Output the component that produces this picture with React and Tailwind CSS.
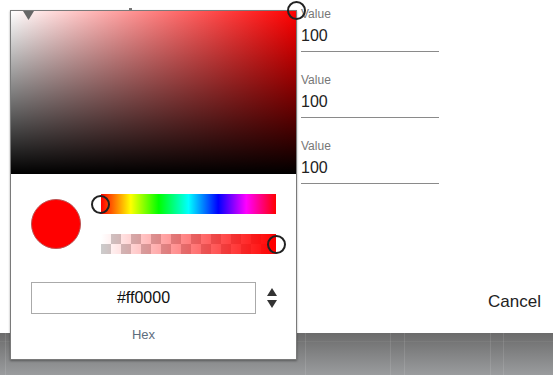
import { useState } from "react";

const fields = ["100", "100", "100"];

export default function App() {
  const [hex, setHex] = useState("#ff0000");

  return (
    <div className="relative flex h-[375px] w-[553px] flex-col overflow-hidden bg-white font-['Liberation_Sans',Arial,sans-serif]">
      {/* page form behind the picker */}
      <div className="flex flex-1 flex-col">
        <div className="flex flex-col pl-[301px] pt-[7px]">
          {fields.map((v, i) => (
            <div key={i} className="mb-[21px] flex w-[138px] flex-col">
              <span className="text-[12px] leading-[14px] text-[#777]">Value</span>
              <div className="border-b border-[#8a8a8a] pt-[5px] pb-[5px] text-[16px] leading-[20px] text-[#222]">
                {v}
              </div>
            </div>
          ))}
        </div>
        <div className="mt-auto flex justify-end pr-[12px] pb-[21px]">
          <button className="text-[17px] leading-[20px] text-[#222]">Cancel</button>
        </div>
      </div>

      {/* backdrop strip */}
      <div className="relative h-[42px] bg-[linear-gradient(to_bottom,#6b6b6b,#9a9c9e)]">
        <div className="absolute inset-x-0 top-[8px] h-px bg-white/5" />
        <div className="absolute inset-y-0 left-[5px] w-px bg-white/10" />
        <div className="absolute inset-y-0 left-[305px] w-px bg-white/10" />
        <div className="absolute inset-y-0 left-[390px] w-px bg-white/10" />
        <div className="absolute inset-y-0 left-[404px] w-px bg-white/10" />
        <div className="absolute inset-y-0 left-[490px] w-px bg-white/10" />
        <div className="absolute inset-y-0 left-[503px] w-px bg-white/10" />
      </div>

      {/* tiny mark peeking above the popup */}
      <span className="absolute left-[129px] top-[8px] h-[2px] w-[3px] bg-[#777]" />

      {/* colour picker popup */}
      <div className="absolute left-[10px] top-[10px] flex h-[350px] w-[287px] flex-col border border-[#7a7a7a] bg-white shadow-[0_1px_2px_rgba(0,0,0,0.35)]">
        <div className="relative h-[163px] bg-[linear-gradient(to_bottom,rgba(0,0,0,0),#000),linear-gradient(to_right,#fff,#f00)]">
          <svg className="absolute left-[12px] top-0" width="11" height="10" viewBox="0 0 11 10">
            <path d="M0 0 H11 L5.5 9 Z" fill="#666" />
          </svg>
          <span className="absolute -right-[10px] -top-[10px] h-[19px] w-[19px] rounded-full border-2 border-[#222]" />
        </div>

        <div className="flex flex-col pl-[20px] pt-[20px]">
          <div className="flex items-start">
            <div className="mt-[5px] h-[50px] w-[50px] rounded-full border border-[#b55] bg-[#f00]" />
            <div className="ml-[20px] flex w-[175px] flex-col gap-[20px]">
              <div className="relative h-[20px] bg-[linear-gradient(to_right,#f00_0%,#ff0_17%,#0f0_33%,#0ff_50%,#00f_67%,#f0f_83%,#f00_100%)]">
                <span className="absolute -left-[10px] top-[0.5px] h-[19px] w-[19px] rounded-full border-2 border-[#222]" />
              </div>
              <div className="relative h-[20px] bg-[linear-gradient(to_right,rgba(255,0,0,0),#f00),repeating-conic-gradient(#ccc_0_25%,#fff_0_50%)] bg-[length:100%_100%,20px_20px]">
                <span className="absolute -right-[10px] top-[0.5px] h-[19px] w-[19px] rounded-full border-2 border-[#222] bg-[linear-gradient(to_right,#f00_50%,#fff_50%)]" />
              </div>
            </div>
          </div>

          <div className="mt-[28px] flex items-center">
            <input
              value={hex}
              onChange={(e) => setHex(e.target.value)}
              className="h-[32px] w-[225px] border border-[#aaa] text-center text-[16px] text-[#111] outline-none"
            />
            <div className="ml-[11px] flex flex-col gap-[4px]">
              <svg width="10" height="8" viewBox="0 0 10 8">
                <path d="M5 0 L10 8 H0 Z" fill="#333" />
              </svg>
              <svg width="10" height="8" viewBox="0 0 10 8">
                <path d="M0 0 H10 L5 8 Z" fill="#333" />
              </svg>
            </div>
          </div>
          <span className="mt-[13px] w-[225px] text-center text-[13px] leading-[16px] text-[#5d6d7e]">Hex</span>
        </div>
      </div>
    </div>
  );
}
